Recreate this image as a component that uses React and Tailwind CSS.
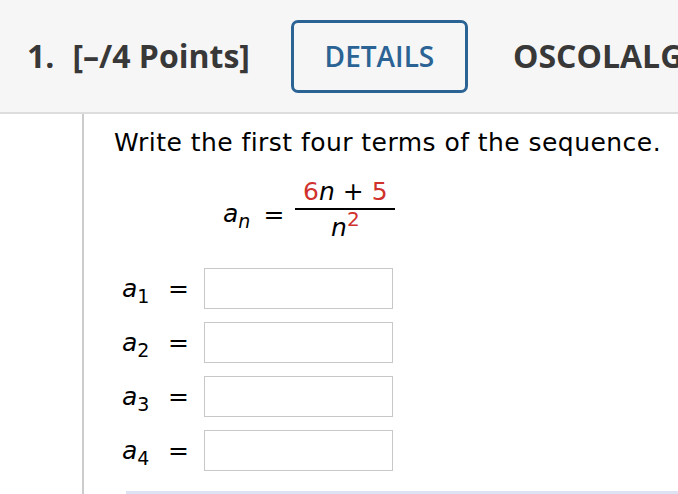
import React from "react";

const Term = ({ n }) => (
  <div className="flex items-center h-[41px]">
    <div className="w-[54px] pl-[8px] text-[25px] leading-none">
      <span className="italic">a</span>
      <span className="text-[19px] relative top-[6px]">{n}</span>
    </div>
    <span className="w-[36px] text-[25px] leading-none">=</span>
    <input
      type="text"
      className="w-[189px] h-[41px] border border-[#c8c8c8] bg-white outline-none"
    />
  </div>
);

const App = () => {
  return (
    <div className="w-[678px] h-[494px] overflow-hidden bg-white">
      {/* header */}
      <div
        className="h-[114px] bg-[#f6f6f6] border-b-2 border-[#dddddd] flex items-center pl-[27px] whitespace-nowrap overflow-hidden text-[#383838] font-bold text-[32px]"
        style={{ fontFamily: '"Open Sans", sans-serif' }}
      >
        <span>1.</span>
        <span className="ml-[18px]">[–/4 Points]</span>
        <button className="ml-[41px] w-[177px] h-[73px] border-[3px] border-[#2b6395] rounded-[7px] text-[#2b6395] text-[28px] font-semibold shrink-0">
          DETAILS
        </button>
        <span className="ml-[45px]">OSCOLALG</span>
      </div>

      {/* body */}
      <div
        className="flex h-[380px]"
        style={{ fontFamily: '"DejaVu Sans", Verdana, sans-serif' }}
      >
        <div className="w-[82px] shrink-0" />
        <div className="flex-1 border-l-2 border-[#cccccc] text-black">
          <p className="pl-[30px] pt-[14px] text-[25px] leading-[30px] tracking-[0.45px] whitespace-nowrap">
            Write the first four terms of the sequence.
          </p>

          {/* formula */}
          <div className="flex items-center ml-[139px] mt-[20px] text-[25px]">
            <div className="relative top-[1px] flex items-baseline">
              <span className="italic">a</span>
              <span className="italic text-[19px] relative top-[6px]">n</span>
            </div>
            <span className="ml-[13px] mr-[11px] relative top-[2px]">=</span>
            <div className="flex flex-col items-center w-[100px]">
              <div className="pb-[2px] leading-[28px] whitespace-nowrap">
                <span className="text-[#d0312d]">6</span>
                <span className="italic">n</span>
                <span> + </span>
                <span className="text-[#d0312d]">5</span>
              </div>
              <div className="w-[100px] h-[2px] bg-black" />
              <div className="leading-[36px] whitespace-nowrap">
                <span className="italic">n</span>
                <span className="text-[#d0312d] text-[20px] relative -top-[10px]">2</span>
              </div>
            </div>
          </div>

          {/* inputs */}
          <div className="flex flex-col gap-[13px] mt-[21px] pl-[30px]">
            <Term n="1" />
            <Term n="2" />
            <Term n="3" />
            <Term n="4" />
          </div>

          <div className="ml-[42px] mt-[20px] h-[10px] bg-[#dde3f3]" />
        </div>
      </div>
    </div>
  );
};

export default App;
